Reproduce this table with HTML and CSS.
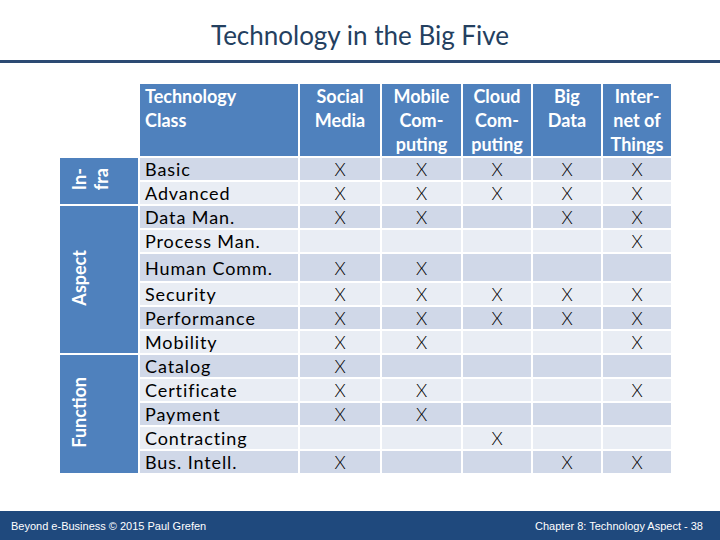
FILE: index.html
```html
<!DOCTYPE html>
<html>
<head>
<meta charset="utf-8">
<link rel="stylesheet" href="styles.css">
</head>
<body>
<div class="slide">
  <header class="title-bar">
    <h1 class="title">Technology in the Big Five</h1>
  </header>
  <main class="content">
    <table class="grid">
      <colgroup>
        <col class="c-band"><col class="c-class"><col class="c-social"><col class="c-mobile"><col class="c-cloud"><col class="c-big"><col class="c-iot">
      </colgroup>
      <thead>
        <tr class="head">
          <th class="blank"></th>
          <th class="h-class">Technology<br>Class</th>
          <th>Social<br>Media</th>
          <th>Mobile<br>Com-<br>puting</th>
          <th>Cloud<br>Com-<br>puting</th>
          <th>Big<br>Data</th>
          <th>Inter-<br>net of<br>Things</th>
        </tr>
      </thead>
      <tbody>
        <tr class="dark">
          <td class="band" rowspan="2"><div class="vlabel">In-<br>fra</div></td>
          <td class="name">Basic</td><td>X</td><td>X</td><td>X</td><td>X</td><td>X</td>
        </tr>
        <tr class="light"><td class="name">Advanced</td><td>X</td><td>X</td><td>X</td><td>X</td><td>X</td></tr>
        <tr class="dark">
          <td class="band" rowspan="6"><div class="vlabel">Aspect</div></td>
          <td class="name">Data Man.</td><td>X</td><td>X</td><td></td><td>X</td><td>X</td>
        </tr>
        <tr class="light"><td class="name">Process Man.</td><td></td><td></td><td></td><td></td><td>X</td></tr>
        <tr class="dark tall"><td class="name">Human Comm.</td><td>X</td><td>X</td><td></td><td></td><td></td></tr>
        <tr class="light"><td class="name">Security</td><td>X</td><td>X</td><td>X</td><td>X</td><td>X</td></tr>
        <tr class="dark"><td class="name">Performance</td><td>X</td><td>X</td><td>X</td><td>X</td><td>X</td></tr>
        <tr class="light"><td class="name">Mobility</td><td>X</td><td>X</td><td></td><td></td><td>X</td></tr>
        <tr class="dark">
          <td class="band" rowspan="5"><div class="vlabel">Function</div></td>
          <td class="name">Catalog</td><td>X</td><td></td><td></td><td></td><td></td>
        </tr>
        <tr class="light"><td class="name">Certificate</td><td>X</td><td>X</td><td></td><td></td><td>X</td></tr>
        <tr class="dark"><td class="name">Payment</td><td>X</td><td>X</td><td></td><td></td><td></td></tr>
        <tr class="light"><td class="name">Contracting</td><td></td><td></td><td>X</td><td></td><td></td></tr>
        <tr class="dark"><td class="name">Bus. Intell.</td><td>X</td><td></td><td></td><td>X</td><td>X</td></tr>
      </tbody>
    </table>
  </main>
  <footer class="footer">
    <span class="foot-left">Beyond e-Business © 2015 Paul Grefen</span>
    <span class="foot-right">Chapter 8: Technology Aspect - 38</span>
  </footer>
</div>
</body>
</html>
```

FILE: styles.css
```css
html, body {
  margin: 0;
  padding: 0;
  background: #ffffff;
}

.slide {
  width: 720px;
  height: 540px;
  display: flex;
  flex-direction: column;
  font-family: Lato, "Open Sans", sans-serif;
  overflow: hidden;
}

.title-bar {
  height: 60px;
  border-bottom: 3px solid #2c4a73;
  display: flex;
  justify-content: center;
  align-items: flex-start;
}

.title {
  margin: 0;
  padding-top: 20px;
  font-family: Lato, sans-serif;
  font-weight: 400;
  font-size: 26px;
  line-height: 30px;
  color: #24405f;
}

.content {
  flex: 1;
  padding: 19px 0 0 58px;
}

.grid {
  border-collapse: separate;
  border-spacing: 2px;
  table-layout: fixed;
  width: 615px;
  font-size: 18px;
  color: #000;
}

.c-band { width: 78px; }
.c-class { width: 158px; }
.c-social { width: 80px; }
.c-mobile { width: 79px; }
.c-cloud { width: 68px; }
.c-big { width: 68px; }
.c-iot { width: 68px; }

.head th {
  height: 70px;
  padding: 0;
  background: #4f81bd;
  color: #ffffff;
  font-weight: 700;
  font-size: 18px;
  line-height: 24px;
  vertical-align: top;
  text-align: center;
}

.head th.blank {
  background: transparent;
}

.head th.h-class {
  text-align: left;
  padding-left: 5px;
}

tbody tr { height: 22px; }
tbody tr.tall { height: 27px; }

tbody td {
  padding: 0;
  line-height: 20px;
  text-align: center;
  vertical-align: middle;
  font-weight: 300;
}

tr.dark td { background: #d0d8e8; }
tr.light td { background: #e9edf4; }

tbody td.name {
  text-align: left;
  padding-left: 5px;
  letter-spacing: 0.9px;
  font-weight: 400;
}

tbody td.band {
  background: #4f81bd;
  text-align: left;
  padding-left: 8px;
}

.vlabel {
  display: inline-block;
  writing-mode: vertical-rl;
  transform: rotate(180deg);
  color: #ffffff;
  font-weight: 700;
  font-size: 18px;
  line-height: 22px;
  text-align: center;
}

.footer {
  height: 29px;
  background: #1f497d;
  color: #ffffff;
  display: flex;
  justify-content: space-between;
  align-items: center;
  padding: 0 17px 0 11px;
  font-family: "Liberation Sans", Arial, sans-serif;
  font-size: 11px;
}
```
